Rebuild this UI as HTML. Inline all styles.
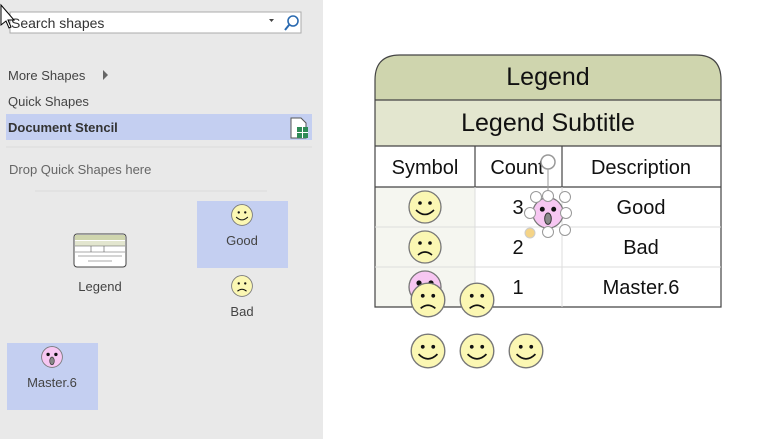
<!DOCTYPE html>
<html><head><meta charset="utf-8"><style>
html,body{margin:0;padding:0;width:768px;height:439px;overflow:hidden;background:#fff;font-family:"Liberation Sans",sans-serif}
</style></head><body>
<svg width="768" height="439" viewBox="0 0 768 439" xmlns="http://www.w3.org/2000/svg" style="position:absolute;left:0;top:0">
<defs>
<g id="happy"><circle r="16" fill="#fbf7b3" stroke="#777" stroke-width="1.3"/><circle cx="-5" cy="-4" r="1.8" fill="#111"/><circle cx="5" cy="-4" r="1.8" fill="#111"/><path d="M-9 3 Q0 12 9 3" fill="none" stroke="#111" stroke-width="1.6"/></g>
<g id="sad"><circle r="16" fill="#fbf7b3" stroke="#777" stroke-width="1.3"/><circle cx="-5" cy="-4" r="1.8" fill="#111"/><circle cx="5" cy="-4" r="1.8" fill="#111"/><path d="M-7 8 Q0 2 7 8" fill="none" stroke="#111" stroke-width="1.6"/></g>
<g id="wow"><circle r="16" fill="#f7c7f2" stroke="#777" stroke-width="1.3"/><circle cx="-6" cy="-4" r="2.6" fill="#111"/><circle cx="6" cy="-4" r="2.6" fill="#111"/><ellipse cx="0" cy="6" rx="3.5" ry="6" fill="#888" stroke="#333"/></g>
</defs>
<rect x="0" y="0" width="323" height="439" fill="#e9e9e9"/>
<rect x="10" y="12" width="291" height="21" fill="#fff" stroke="#ababab"/>
<text x="11" y="28" font-size="14" fill="#333">Search shapes</text>
<path d="M269 19 l5 0 l-2.5 3z" fill="#444"/>
<circle cx="293" cy="21" r="5" fill="none" stroke="#2a6ab0" stroke-width="1.6"/><path d="M289 25 l-4 5" stroke="#2a6ab0" stroke-width="2"/>
<path d="M1 5 L1 25 L6 21 L9 28 L11 27 L8 20 L14 20 Z" fill="#fff" stroke="#000"/>
<text x="8" y="80" font-size="13" fill="#444">More Shapes</text>
<path d="M103 70 l5 5 l-5 5z" fill="#666"/>
<text x="8" y="106" font-size="13" fill="#444">Quick Shapes</text>
<rect x="6" y="114" width="306" height="26" fill="#c4cff1"/>
<text x="8" y="132" font-size="13" font-weight="bold" fill="#333">Document Stencil</text>
<path d="M291 118 h10 l5 5 v15 h-15z" fill="#fff" stroke="#555"/>
<rect x="297" y="127" width="11" height="11" fill="#2e8b57"/><path d="M297 132.5h11M302.5 127v11" stroke="#fff"/>
<line x1="6" y1="147" x2="312" y2="147" stroke="#dcdcdc"/>
<text x="9" y="174" font-size="13" fill="#666">Drop Quick Shapes here</text>
<line x1="35" y1="191" x2="267" y2="191" stroke="#dcdcdc"/>
<rect x="74" y="234" width="52" height="33" rx="3" fill="#fff" stroke="#444"/>
<rect x="75" y="235" width="50" height="5" fill="#cfd5ae"/><rect x="75" y="241" width="50" height="5" fill="#e3e6cf"/>
<g stroke="#555" stroke-width="0.6"><line x1="75" y1="246" x2="125" y2="246"/><line x1="75" y1="252" x2="125" y2="252"/><line x1="91" y1="246" x2="91" y2="252"/><line x1="104" y1="246" x2="104" y2="252"/><line x1="78" y1="256" x2="122" y2="256"/><line x1="88" y1="261" x2="112" y2="261"/></g>
<text x="100" y="291" font-size="13" fill="#444" text-anchor="middle">Legend</text>
<rect x="197" y="201" width="91" height="67" fill="#c4cff1"/>
<use href="#happy" transform="translate(242,215) scale(0.65)"/>
<text x="242" y="245" font-size="13" fill="#444" text-anchor="middle">Good</text>
<use href="#sad" transform="translate(242,286) scale(0.65)"/>
<text x="242" y="316" font-size="13" fill="#444" text-anchor="middle">Bad</text>
<rect x="7" y="343" width="91" height="67" fill="#c4cff1"/>
<use href="#wow" transform="translate(52,357) scale(0.65)"/>
<text x="52" y="387" font-size="13" fill="#444" text-anchor="middle">Master.6</text>
<path d="M375 100 V80 Q375 55 400 55 H696 Q721 55 721 80 V100 Z" fill="#cfd5ae"/>
<rect x="375" y="100" width="346" height="46" fill="#e3e6cf"/>
<rect x="375" y="187" width="100" height="120" fill="#f5f6f0"/>
<path d="M375 307 V80 Q375 55 400 55 H696 Q721 55 721 80 V307 Z" fill="none" stroke="#444" stroke-width="1.2"/>
<g stroke="#444" stroke-width="1.2"><line x1="375" y1="100" x2="721" y2="100"/><line x1="375" y1="146" x2="721" y2="146"/><line x1="375" y1="187" x2="721" y2="187"/><line x1="475" y1="146" x2="475" y2="187"/><line x1="562" y1="146" x2="562" y2="187"/></g>
<g stroke="#ddd"><line x1="375" y1="227" x2="721" y2="227"/><line x1="375" y1="267" x2="721" y2="267"/><line x1="475" y1="187" x2="475" y2="307"/><line x1="562" y1="187" x2="562" y2="307"/></g>
<g font-family="Liberation Sans,sans-serif" fill="#111" text-anchor="middle">
<text x="548" y="85" font-size="25">Legend</text>
<text x="548" y="131" font-size="25">Legend Subtitle</text>
<text x="425" y="174" font-size="20">Symbol</text>
<text x="517" y="174" font-size="20">Count</text>
<text x="641" y="174" font-size="20">Description</text>
<text x="518" y="214" font-size="20">3</text><text x="641" y="214" font-size="20">Good</text>
<text x="518" y="254" font-size="20">2</text><text x="641" y="254" font-size="20">Bad</text>
<text x="518" y="294" font-size="20">1</text><text x="641" y="294" font-size="20">Master.6</text>
</g>
<use href="#happy" transform="translate(425,207)"/>
<use href="#sad" transform="translate(425,247)"/>
<use href="#wow" transform="translate(425,287)"/>
<line x1="548" y1="165" x2="548" y2="196" stroke="#999"/>
<circle cx="548" cy="162" r="7" fill="#fff" stroke="#999" stroke-width="1.5"/>
<use href="#wow" transform="translate(548,213) scale(0.95)"/>
<g fill="#fff" stroke="#999"><circle cx="536" cy="197" r="5.5"/><circle cx="548" cy="196" r="5.5"/><circle cx="565" cy="197" r="5.5"/><circle cx="530" cy="213" r="5.5"/><circle cx="566" cy="213" r="5.5"/><circle cx="548" cy="232" r="5.5"/><circle cx="565" cy="230" r="5.5"/></g>
<circle cx="530" cy="233" r="5" fill="#f5d487" stroke="#ccc"/>
<use href="#sad" transform="translate(428,300) scale(1.05)"/>
<use href="#sad" transform="translate(477,300) scale(1.05)"/>
<use href="#happy" transform="translate(428,351) scale(1.05)"/>
<use href="#happy" transform="translate(477,351) scale(1.05)"/>
<use href="#happy" transform="translate(526,351) scale(1.05)"/>
</svg>
</body></html>
